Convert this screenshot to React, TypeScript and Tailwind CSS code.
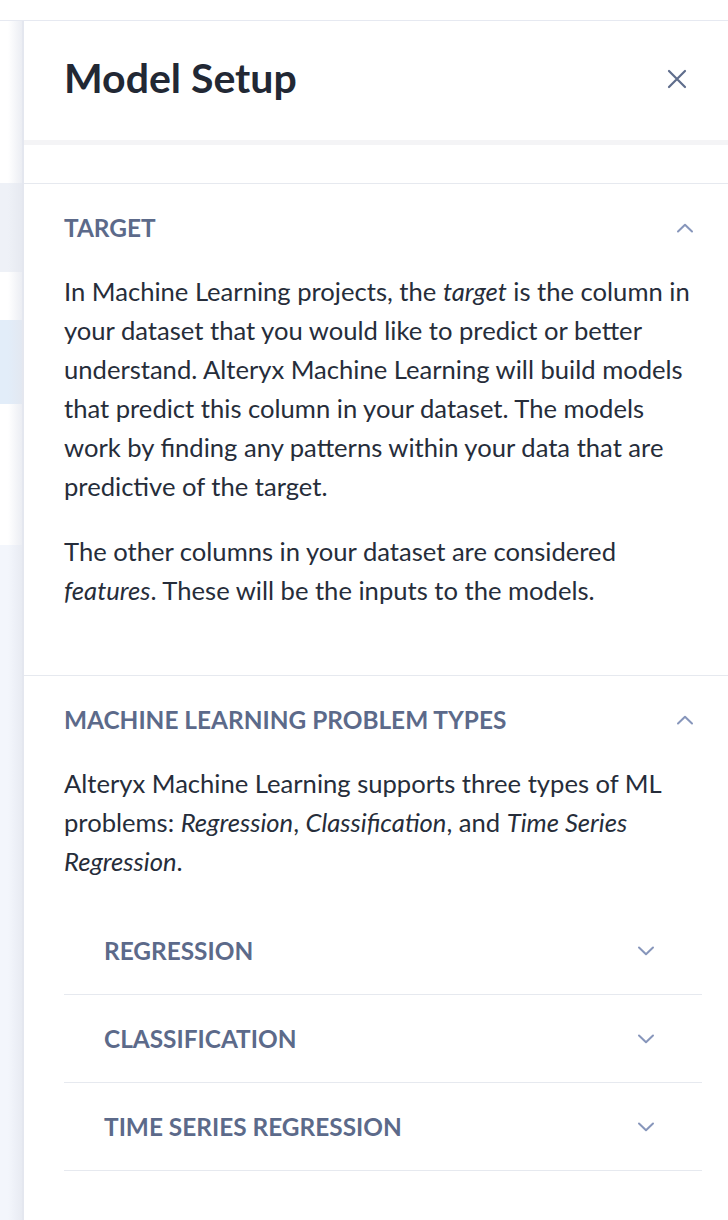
import { ReactNode } from "react";

const Chevron = ({ up }: { up?: boolean }) => (
  <svg width="18" height="10" viewBox="0 0 18 10" fill="none" className="shrink-0">
    <path
      d={up ? "M2 8.5 L9 1.8 L16 8.5" : "M2 1.5 L9 8.2 L16 1.5"}
      stroke="#8796bb"
      strokeWidth="2"
      strokeLinecap="round"
      strokeLinejoin="round"
    />
  </svg>
);

const SubItem = ({ title }: { title: string }) => (
  <div className="flex h-[88px] items-center justify-between border-b border-[#e6e9ef] pl-10 pr-[47px]">
    <span className="text-[24.4px] font-bold leading-6 text-[#5c6a8a]">{title}</span>
    <Chevron />
  </div>
);

const Section = ({ title, children }: { title: string; children: ReactNode }) => (
  <section className="border-t border-[#e6e9ef] pl-10 pr-[26px] pt-8">
    <div className="flex h-6 items-center justify-between pr-2">
      <h2 className="text-[24.4px] font-bold leading-6 text-[#5c6a8a]">{title}</h2>
      <Chevron up />
    </div>
    <div className="mt-8">{children}</div>
  </section>
);

const P = ({ children }: { children: ReactNode }) => (
  <p className="mb-[26px] max-w-[632px] text-[25.6px] leading-[39px] text-[#262d3a]">{children}</p>
);

export default function App() {
  return (
    <div
      className="flex h-[1220px] w-[728px] flex-col overflow-hidden bg-white"
      style={{ fontFamily: "Lato, 'Noto Sans', sans-serif" }}
    >
      {/* top bar edge */}
      <div className="h-[21px] shrink-0 border-b border-[#e6e9f1] bg-white" />

      <div className="flex min-h-0 flex-1">
        {/* page behind the drawer */}
        <div className="relative flex w-[22px] shrink-0 flex-col">
          <div className="h-[162px] bg-white" />
          <div className="h-[89px] bg-[#eef1f7]" />
          <div className="h-[48px] bg-white" />
          <div className="h-[84px] bg-[#e2edf9]" />
          <div className="h-[141px] bg-white" />
          <div className="flex-1 bg-[#f3f6fc]" />
          <div className="pointer-events-none absolute inset-y-0 right-0 w-[14px] bg-gradient-to-r from-transparent to-[#e3e6ee]/70" />
        </div>

        {/* drawer */}
        <div className="flex min-w-0 flex-1 flex-col border-l-2 border-[#e4e7ef] bg-white">
          <header className="flex h-[119px] shrink-0 items-center justify-between pb-[7px] pl-10 pr-10">
            <h1 className="text-[41px] font-bold leading-none text-[#222834]">Model Setup</h1>
            <svg width="22" height="22" viewBox="0 0 22 22" fill="none" className="mt-[4px]">
              <path d="M3 3 L19 19 M19 3 L3 19" stroke="#5f6d8c" strokeWidth="2.2" strokeLinecap="round" />
            </svg>
          </header>
          <div className="h-[5px] shrink-0 bg-[#f4f4f6]" />
          <div className="h-[38px] shrink-0" />

          <Section title="TARGET">
            <P>
              In Machine Learning projects, the <em>target</em> is the column in your dataset that you would like to
              predict or better understand. Alteryx Machine Learning will build models that predict this column in
              your dataset. The models work by finding any patterns within your data that are predictive of the
              target.
            </P>
            <P>
              The other columns in your dataset are considered <em>features</em>. These will be the inputs to the
              models.
            </P>
            <div className="h-[39px]" />
          </Section>

          <Section title="MACHINE LEARNING PROBLEM TYPES">
            <P>
              Alteryx Machine Learning supports three types of ML problems: <em>Regression</em>,{" "}
              <em>Classification</em>, and <em>Time Series Regression</em>.
            </P>
            <div>
              <SubItem title="REGRESSION" />
              <SubItem title="CLASSIFICATION" />
              <SubItem title="TIME SERIES REGRESSION" />
            </div>
          </Section>
        </div>
      </div>
    </div>
  );
}
